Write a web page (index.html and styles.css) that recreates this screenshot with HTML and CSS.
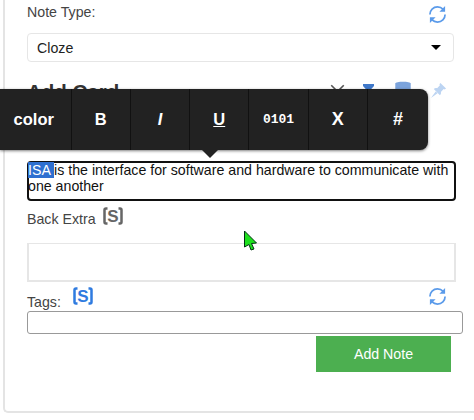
FILE: index.html
```html
<!DOCTYPE html>
<html lang="en">
<head>
    <meta charset="UTF-8">
    <meta name="viewport" content="width=device-width, initial-scale=1.0">
    <title>Add Note</title>
    <link rel="stylesheet" href="styles.css">
</head>
<body>
<div class="panel">
    <div class="label-row note-type-row">
        <label class="field-label">Note Type:</label>
        <svg class="sync-icon" viewBox="0 0 20 20"><use href="#sync"></use></svg>
    </div>
    <div class="select-box">
        <span>Cloze</span>
        <span class="select-arrow"></span>
    </div>
    <div class="card-header">
        <h2>Add Card</h2>
        <div class="card-tools">
            <svg class="tool-x" viewBox="0 0 12 12"><path d="M1 1L11 11M11 1L1 11"></path></svg>
            <svg class="tool-filter" viewBox="0 0 12 14"><path d="M0 0H12V2L7.500 7V14H4.500V7L0 2Z"></path></svg>
            <svg class="tool-db" viewBox="0 0 18 14"><path d="M0 3C0 0 18 0 18 3V14H0Z"></path></svg>
            <svg class="tool-pin" viewBox="0 0 18 18"><path d="M11 1L17 7L15.500 8L14.500 7.500L11.500 10.500C12 12 11.500 13 10.500 14L4 7.500C5 6.500 6 6 7.500 6.500L10.500 3.500L10 2.500ZM6 10L1 17L8 12Z"></path></svg>
        </div>
    </div>
    <div class="editor">
        <div class="editor-text"><span class="selected">ISA </span>is the interface for software and hardware to communicate with one another</div>
    </div>
    <div class="label-row back-row">
        <label class="field-label">Back Extra</label>
        <svg class="sticky-icon grey" viewBox="0 0 20 18"><use href="#brackets"></use><text x="10" y="14.500" text-anchor="middle">S</text></svg>
    </div>
    <div class="back-field"></div>
    <div class="label-row tags-row">
        <label class="field-label tags-label">Tags:</label>
        <svg class="sticky-icon blue" viewBox="0 0 20 18"><use href="#brackets"></use><text x="10" y="14.500" text-anchor="middle">S</text></svg>
        <svg class="sync-icon" viewBox="0 0 20 20"><use href="#sync"></use></svg>
    </div>
    <div class="tags-input"></div>
    <div class="button-container">
        <button type="button" class="add-note">Add Note</button>
    </div>
</div>

<div class="toolbar">
    <div class="tool-btn first">color</div>
    <div class="tool-btn">B</div>
    <div class="tool-btn"><i>I</i></div>
    <div class="tool-btn"><u>U</u></div>
    <div class="tool-btn mono">0101</div>
    <div class="tool-btn big">X</div>
    <div class="tool-btn big last">#</div>
</div>

<svg class="cursor" viewBox="0 0 14 21"><path d="M1 1L13 13L8 13.500L10.500 19L7.500 20L5.500 14.500L1 17Z"></path></svg>

<svg class="defs">
    <defs>
        <g id="sync">
            <path class="sync-line" d="M2 10C2 5.500 5.500 2 10 2C12.500 2 14.500 3 16 4.500M18 10C18 14.500 14.500 18 10 18C7.500 18 5.500 17 4 15.500"></path>
            <path class="sync-head" d="M18 1V7H12ZM2 19V13H8Z"></path>
        </g>
        <path id="brackets" class="bracket" d="M4.500 1.500H3C2 1.500 1.500 2 1.500 3V15C1.500 16 2 16.500 3 16.500H4.500M15.500 1.500H17C18 1.500 18.500 2 18.500 3V15C18.500 16 18 16.500 17 16.500H15.500"></path>
    </defs>
</svg>
</body>
</html>
```

FILE: styles.css
```css
* {
    box-sizing: border-box;
}

html, body {
    height: 420px;
    overflow: hidden;
}

body {
    font-family: "Liberation Sans", Arial, sans-serif;
    margin: 0;
    padding: 0;
    background-color: #fff;
    position: relative;
}

.panel {
    width: 471px;
    height: 413px;
    margin-left: 3px;
    padding: 0 11px 0 22px;
    border-left: 2px solid #e4e4e4;
    border-bottom: 2px solid #e4e4e4;
    border-bottom-left-radius: 5px;
}

.label-row {
    display: flex;
    align-items: center;
}

.field-label {
    font-size: 14.200px;
    color: #444;
}

.note-type-row {
    height: 33px;
    justify-content: space-between;
    padding-right: 16px;
    padding-bottom: 9px;
}

.note-type-row .sync-icon {
    margin-top: 4px;
}

.sync-icon {
    width: 19px;
    height: 19px;
    flex: none;
}

.sync-line {
    fill: none;
    stroke: #5b9bea;
    stroke-width: 1.800;
}

.sync-head {
    fill: #5b9bea;
}

.select-box {
    display: flex;
    justify-content: space-between;
    align-items: center;
    height: 29px;
    margin-right: 9px;
    padding: 0 12px 0 9px;
    font-size: 14.200px;
    color: #222;
    border: 1px solid #e6e6e6;
    border-radius: 4px;
}

.select-arrow {
    width: 0;
    height: 0;
    border-left: 5.500px solid transparent;
    border-right: 5.500px solid transparent;
    border-top: 5.500px solid #000;
}

.card-header {
    display: flex;
    justify-content: space-between;
    align-items: flex-start;
    height: 81px;
    margin-top: 18px;
    padding-right: 16px;
}

h2 {
    margin: 0;
    font-size: 20.500px;
    line-height: 24px;
    color: #333;
}

.card-tools {
    display: flex;
    align-items: flex-start;
    margin-top: 1px;
}

.tool-x {
    width: 15px;
    height: 15px;
    margin-top: 3px;
    fill: none;
    stroke: #555;
    stroke-width: 1.300;
}

.tool-filter {
    width: 11px;
    height: 13px;
    margin: 3px 0 0 18px;
    fill: #3f78c9;
}

.tool-db {
    width: 18px;
    height: 12px;
    margin: 0 0 0 20px;
    fill: #7ba3dc;
}

.tool-pin {
    width: 17px;
    height: 17px;
    margin: 1px 0 0 18px;
    fill: #bcd4f2;
}

.editor {
    width: 429px;
    height: 40px;
    color: #111;
    border: 2px solid #111;
    border-radius: 4px;
}

.editor-text {
    margin: -1px 0 0 -1px;
    font-size: 14.200px;
    line-height: 16px;
}

.selected {
    background-color: #2e6fd0;
    color: #fff;
}

.back-row {
    height: 42px;
    padding-bottom: 7px;
    gap: 7px;
}

.sticky-icon {
    width: 20px;
    height: 18px;
    flex: none;
}

.sticky-icon text {
    font-family: "Liberation Sans", Arial, sans-serif;
    font-size: 17px;
    font-weight: bold;
}

.bracket {
    fill: none;
    stroke-width: 2.500;
}

.grey {
    margin-top: -6px;
    fill: #666;
    stroke: #666;
}

.grey text, .blue text {
    stroke: none;
}

.blue {
    margin: -1px auto 0 12px;
    fill: #2f7be0;
    stroke: #2f7be0;
}

.back-field {
    width: 429px;
    height: 39px;
    border: 2px solid #e6e6e6;
    border-top-width: 1px;
}

.tags-row {
    height: 29px;
    padding-right: 16px;
}

.tags-label {
    margin-top: 10px;
}

.tags-input {
    height: 23px;
    border: 1px solid #999;
    border-radius: 3px;
}

.button-container {
    display: flex;
    justify-content: flex-end;
    margin: 2px 12px 0 0;
}

.add-note {
    width: 135px;
    height: 36px;
    font-family: inherit;
    font-size: 14.200px;
    color: #fff;
    background-color: #4caf50;
    border: none;
}

/* floating format bar over the card */
.toolbar {
    position: absolute;
    left: 0;
    top: 89px;
    width: 428px;
    height: 61px;
    display: flex;
    color: #fff;
    background-color: #222;
    border-radius: 0 8px 8px 0;
    box-shadow: 0 1px 3px rgba(0, 0, 0, 0.5);
}

.toolbar::after {
    content: "";
    position: absolute;
    left: 202px;
    top: 61px;
    border-left: 8px solid transparent;
    border-right: 8px solid transparent;
    border-top: 8px solid #222;
}

.tool-btn {
    display: flex;
    justify-content: center;
    align-items: center;
    width: 59.300px;
    font-size: 16.500px;
    font-weight: bold;
    border-right: 1px solid #111;
}

.tool-btn.first {
    width: 71.500px;
    padding-right: 3px;
}

.tool-btn.last {
    width: 60px;
    border-right: none;
}

.tool-btn.mono {
    font-family: "Liberation Mono", monospace;
    font-size: 13px;
}

.tool-btn.big {
    font-size: 18px;
}

.cursor {
    position: absolute;
    left: 243px;
    top: 230px;
    width: 15px;
    height: 21px;
    fill: #1ee01e;
    stroke: #031;
    stroke-width: 1;
}

.defs {
    position: absolute;
    width: 0;
    height: 0;
}
```
